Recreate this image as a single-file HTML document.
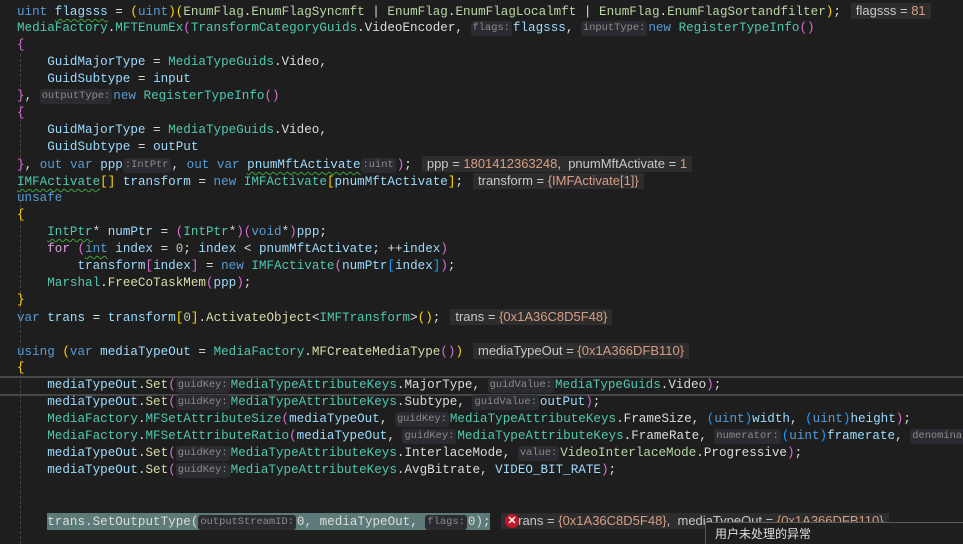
<!DOCTYPE html>
<html style="width:963px;height:544px;overflow:hidden"><head><meta charset="utf-8"><style>
body{margin:0;width:963px;height:544px;background:#1e1e1e;overflow:hidden;position:relative;font-family:"Liberation Mono",monospace;font-size:12.6px;color:#dcdcdc}
.l{position:absolute;left:17px;height:17px;line-height:17px;white-space:pre}
.k{color:#569cd6}.t{color:#4ec9b0}.v{color:#9cdcfe}.m{color:#dcdcaa}.e{color:#b8d7a3}.p{color:#d8a0df}.n{color:#b5cea8}
.b1{color:#ffd700}.b2{color:#da70d6}.b3{color:#179fff}
.h{display:inline-block;background:#2b2c31;color:#8c8c8c;font-size:10.4px;line-height:15px;padding:0 2px;border-radius:3px;margin-right:1px;vertical-align:1px}
.sq{text-decoration:underline wavy #3ba33b;text-decoration-thickness:1px;text-underline-offset:3px}
.d{display:inline-block;background:#2d2d2d;font-family:"Liberation Sans",sans-serif;font-size:13px;color:#c8c8c8;line-height:16px;padding:0 5px;margin-left:10px;vertical-align:0}
.o{color:#d69d85}
</style></head><body>
<div style="position:absolute;left:20px;top:54px;height:490px;border-left:1px dashed #444"></div>
<div style="position:absolute;left:0;top:376px;width:963px;height:16px;border-top:2px solid #464646;border-bottom:2px solid #464646"></div>
<div style="position:absolute;left:47px;top:513px;width:443px;height:17px;background:#5c7b78"></div>

<div class="l" style="top:3px"><span class="k">uint</span> <span class="v sq">flagsss</span> = <span class="b1">(</span><span class="k">uint</span><span class="b1">)(</span><span class="e">EnumFlag</span>.<span class="e">EnumFlagSyncmft</span> | <span class="e">EnumFlag</span>.<span class="e">EnumFlagLocalmft</span> | <span class="e">EnumFlag</span>.<span class="e">EnumFlagSortandfilter</span><span class="b1">)</span>;<span class="d">flagsss = <span class="o">81</span></span></div>
<div class="l" style="top:20px"><span class="t">MediaFactory</span>.<span class="t">MFTEnumEx</span><span class="b2">(</span><span class="t">TransformCategoryGuids</span>.VideoEncoder, <span class="h">flags:</span><span class="v">flagsss</span>, <span class="h">inputType:</span><span class="k">new</span> <span class="t">RegisterTypeInfo</span><span class="b2">()</span></div>
<div class="l" style="top:37px"><span class="b2">{</span></div>
<div class="l" style="top:54px">    <span class="v">GuidMajorType</span> = <span class="t">MediaTypeGuids</span>.Video,</div>
<div class="l" style="top:71px">    <span class="v">GuidSubtype</span> = <span class="v">input</span></div>
<div class="l" style="top:88px"><span class="b2">}</span>, <span class="h">outputType:</span><span class="k">new</span> <span class="t">RegisterTypeInfo</span><span class="b2">()</span></div>
<div class="l" style="top:105px"><span class="b2">{</span></div>
<div class="l" style="top:122px">    <span class="v">GuidMajorType</span> = <span class="t">MediaTypeGuids</span>.Video,</div>
<div class="l" style="top:139px">    <span class="v">GuidSubtype</span> = <span class="v">outPut</span></div>
<div class="l" style="top:156px"><span class="b2">}</span>, <span class="k">out</span> <span class="k">var</span> <span class="v">ppp</span><span class="h">:IntPtr</span>, <span class="k">out</span> <span class="k">var</span> <span class="v sq">pnumMftActivate</span><span class="h">:uint</span><span class="b2">)</span>;<span class="d">ppp = <span class="o">1801412363248</span>,&nbsp; pnumMftActivate = <span class="o">1</span></span></div>
<div class="l" style="top:173px"><span class="t sq">IMFActivate</span><span class="b1">[]</span> <span class="v">transform</span> = <span class="k">new</span> <span class="t">IMFActivate</span><span class="b1">[</span><span class="v">pnumMftActivate</span><span class="b1">]</span>;<span class="d">transform = <span class="o">{IMFActivate[1]}</span></span></div>
<div class="l" style="top:190px"><span class="k">unsafe</span></div>
<div class="l" style="top:207px"><span class="b1">{</span></div>
<div class="l" style="top:224px">    <span class="t sq">IntPtr</span>* <span class="v">numPtr</span> = <span class="b2">(</span><span class="t">IntPtr</span>*<span class="b2">)(</span><span class="k">void</span>*<span class="b2">)</span><span class="v">ppp</span>;</div>
<div class="l" style="top:241px">    <span class="p">for</span> <span class="b2">(</span><span class="k sq">int</span> <span class="v">index</span> = <span class="n">0</span>; <span class="v">index</span> &lt; <span class="v">pnumMftActivate</span>; ++<span class="v">index</span><span class="b2">)</span></div>
<div class="l" style="top:258px">        <span class="v">transform</span><span class="b2">[</span><span class="v">index</span><span class="b2">]</span> = <span class="k">new</span> <span class="t">IMFActivate</span><span class="b2">(</span><span class="v">numPtr</span><span class="b3">[</span><span class="v">index</span><span class="b3">]</span><span class="b2">)</span>;</div>
<div class="l" style="top:275px">    <span class="t">Marshal</span>.<span class="m">FreeCoTaskMem</span><span class="b2">(</span><span class="v">ppp</span><span class="b2">)</span>;</div>
<div class="l" style="top:292px"><span class="b1">}</span></div>
<div class="l" style="top:309px"><span class="k">var</span> <span class="v">trans</span> = <span class="v">transform</span><span class="b1">[</span><span class="n">0</span><span class="b1">]</span>.<span class="m">ActivateObject</span>&lt;<span class="t">IMFTransform</span>&gt;<span class="b1">()</span>;<span class="d">trans = <span class="o">{0x1A36C8D5F48}</span></span></div>
<div class="l" style="top:343px"><span class="k">using</span> <span class="b1">(</span><span class="k">var</span> <span class="v">mediaTypeOut</span> = <span class="t">MediaFactory</span>.<span class="m">MFCreateMediaType</span><span class="b2">()</span><span class="b1">)</span><span class="d">mediaTypeOut = <span class="o">{0x1A366DFB110}</span></span></div>
<div class="l" style="top:360px"><span class="b1">{</span></div>
<div class="l" style="top:377px">    <span class="v">mediaTypeOut</span>.<span class="m">Set</span><span class="b2">(</span><span class="h">guidKey:</span><span class="t">MediaTypeAttributeKeys</span>.MajorType, <span class="h">guidValue:</span><span class="t">MediaTypeGuids</span>.Video<span class="b2">)</span>;</div>
<div class="l" style="top:394px">    <span class="v">mediaTypeOut</span>.<span class="m">Set</span><span class="b2">(</span><span class="h">guidKey:</span><span class="t">MediaTypeAttributeKeys</span>.Subtype, <span class="h">guidValue:</span><span class="v">outPut</span><span class="b2">)</span>;</div>
<div class="l" style="top:411px">    <span class="t">MediaFactory</span>.<span class="t">MFSetAttributeSize</span><span class="b2">(</span><span class="v">mediaTypeOut</span>, <span class="h">guidKey:</span><span class="t">MediaTypeAttributeKeys</span>.FrameSize, <span class="b3">(</span><span class="k">uint</span><span class="b3">)</span><span class="v">width</span>, <span class="b3">(</span><span class="k">uint</span><span class="b3">)</span><span class="v">height</span><span class="b2">)</span>;</div>
<div class="l" style="top:428px">    <span class="t">MediaFactory</span>.<span class="t">MFSetAttributeRatio</span><span class="b2">(</span><span class="v">mediaTypeOut</span>, <span class="h">guidKey:</span><span class="t">MediaTypeAttributeKeys</span>.FrameRate, <span class="h">numerator:</span><span class="b3">(</span><span class="k">uint</span><span class="b3">)</span><span class="v">framerate</span>, <span class="h">denominator:</span></div>
<div class="l" style="top:445px">    <span class="v">mediaTypeOut</span>.<span class="m">Set</span><span class="b2">(</span><span class="h">guidKey:</span><span class="t">MediaTypeAttributeKeys</span>.InterlaceMode, <span class="h">value:</span><span class="e">VideoInterlaceMode</span>.Progressive<span class="b2">)</span>;</div>
<div class="l" style="top:462px">    <span class="v">mediaTypeOut</span>.<span class="m">Set</span><span class="b2">(</span><span class="h">guidKey:</span><span class="t">MediaTypeAttributeKeys</span>.AvgBitrate, <span class="v">VIDEO_BIT_RATE</span><span class="b2">)</span>;</div>
<div class="l" style="top:513px">    trans.SetOutputType(<span class="h">outputStreamID:</span>0, mediaTypeOut, <span class="h">flags:</span>0);<span class="d" style="padding-left:14px">trans = <span class="o">{0x1A36C8D5F48}</span>,&nbsp; mediaTypeOut = <span class="o">{0x1A366DFB110}</span></span></div>

<div style="position:absolute;left:505px;top:514px;width:14px;height:14px;border-radius:50%;background:#c5162a;color:#fff;font:bold 11px/14px 'Liberation Sans',sans-serif;text-align:center">✕</div>
<div style="position:absolute;left:705px;top:522px;width:249px;height:22px;background:#1f1f1f;border-top:1px solid #5a5a5a;border-left:1px solid #5a5a5a;color:#e0e0e0;font:12px/22px 'Liberation Sans','Noto Sans CJK SC',sans-serif;padding-left:9px;overflow:hidden">用户未处理的异常</div>
</body></html>
